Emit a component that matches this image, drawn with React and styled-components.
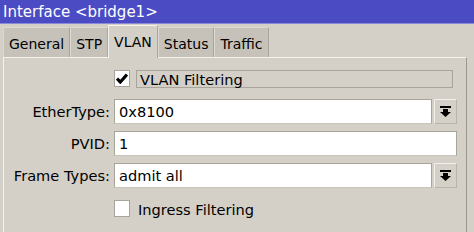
import React from 'react';
import styled, { createGlobalStyle } from 'styled-components';

const GlobalStyle = createGlobalStyle`
  html, body {
    margin: 0;
    padding: 0;
    background: #d4d0c8;
  }
  body {
    font-family: "DejaVu Sans", Verdana, sans-serif;
    font-size: 14.6px;
    color: #000;
  }
`;

const Window = styled.div`
  width: 474px;
  height: 232px;
  overflow: hidden;
  background: #d4d0c8;
  display: flex;
  flex-direction: column;
`;

const TitleBar = styled.div`
  height: 24px;
  background: #4b4cc4;
  color: #fff;
  font-size: 15px;
  display: flex;
  align-items: center;
  padding-left: 3px;
  border-bottom: 1px solid #8a8ad8;
  box-sizing: border-box;
`;

const Tabs = styled.div`
  display: flex;
  align-items: flex-end;
  height: 33px;
  padding-left: 3px;
`;

const Tab = styled.div`
  height: ${p => (p.$active ? '33px' : '30px')};
  box-sizing: border-box;
  padding: 0 5px;
  display: flex;
  align-items: center;
  padding-top: ${p => (p.$active ? '0' : '2px')};
  background: ${p => (p.$active ? '#d4d0c8' : '#c6c2ba')};
  border-top: 1px solid ${p => (p.$active ? '#f4f2ee' : '#dcd9d3')};
  border-left: 1px solid ${p => (p.$active ? '#f4f2ee' : '#dcd9d3')};
  border-right: 1px solid #aaa69e;
  font-size: 14px;
  margin-bottom: ${p => (p.$active ? '-1px' : '0')};
  position: relative;
  z-index: ${p => (p.$active ? 1 : 0)};
`;

const Panel = styled.div`
  flex: 1;
  margin: 0 7px 0 3px;
  border-top: 1px solid #f4f2ee;
  border-left: 1px solid #f4f2ee;
  border-right: 1px solid #9c988f;
  padding: 12px 9px 0 0;
  display: flex;
  flex-direction: column;
`;

const Row = styled.div`
  display: flex;
  align-items: center;
  height: ${p => p.$h || 25}px;
  margin-top: ${p => p.$gap || 0}px;
`;

const Label = styled.div`
  width: 106px;
  text-align: right;
  padding-right: 4px;
  white-space: nowrap;
`;

const Field = styled.div`
  flex: 1;
  display: flex;
  gap: 2px;
  height: 100%;
`;

const Input = styled.div`
  flex: 1;
  background: #fff;
  border: 1px solid #a8a49c;
  border-bottom-color: #c8c4bc;
  box-sizing: border-box;
  display: flex;
  align-items: center;
  padding-left: 4px;
`;

const DropButton = styled.div`
  width: 23px;
  box-sizing: border-box;
  background: #d4d0c8;
  border: 1px solid #b8b4ac;
  border-top-color: #f2f0ec;
  border-left-color: #f2f0ec;
  display: flex;
  align-items: center;
  justify-content: center;
`;

const Check = styled.div`
  width: 16px;
  height: 17px;
  box-sizing: border-box;
  background: #fff;
  border: 1px solid #a8a49c;
  display: flex;
  align-items: center;
  justify-content: center;
  flex-shrink: 0;
`;

const CheckText = styled.div`
  margin-left: ${p => (p.$boxed ? '4px' : '6px')};
  flex: ${p => (p.$boxed ? 1 : 'none')};
  height: 100%;
  box-sizing: border-box;
  display: flex;
  align-items: center;
  padding-left: ${p => (p.$boxed ? '3px' : '0')};
  border: ${p => (p.$boxed ? '1px solid #a8a49c' : 'none')};
  margin-right: ${p => (p.$boxed ? '4px' : '0')};
`;

const DropIcon = () => (
  <svg width="11" height="11" viewBox="0 0 11 11">
    <rect x="0" y="0" width="11" height="2" fill="#000" />
    <rect x="3" y="3" width="5" height="3" fill="#000" />
    <polygon points="0,6 11,6 5.5,11" fill="#000" />
  </svg>
);

const Tick = () => (
  <svg width="12" height="11" viewBox="0 0 12 11">
    <polyline points="1,5.5 4.3,9 11,1.5" fill="none" stroke="#000" strokeWidth="3.2" />
  </svg>
);

const tabs = ['General', 'STP', 'VLAN', 'Status', 'Traffic'];

export default function App() {
  return (
    <Window>
      <GlobalStyle />
      <TitleBar>Interface &lt;bridge1&gt;</TitleBar>
      <Tabs>
        {tabs.map(t => (
          <Tab key={t} $active={t === 'VLAN'}>{t}</Tab>
        ))}
      </Tabs>
      <Panel>
        <Row $h={18}>
          <Label />
          <Field>
            <Check><Tick /></Check>
            <CheckText $boxed>VLAN Filtering</CheckText>
          </Field>
        </Row>
        <Row $gap={11}>
          <Label>EtherType:</Label>
          <Field>
            <Input>0x8100</Input>
            <DropButton><DropIcon /></DropButton>
          </Field>
        </Row>
        <Row $gap={7}>
          <Label>PVID:</Label>
          <Field>
            <Input>1</Input>
          </Field>
        </Row>
        <Row $gap={7}>
          <Label>Frame Types:</Label>
          <Field>
            <Input>admit all</Input>
            <DropButton><DropIcon /></DropButton>
          </Field>
        </Row>
        <Row $h={18} $gap={12}>
          <Label />
          <Field>
            <Check />
            <CheckText>Ingress Filtering</CheckText>
          </Field>
        </Row>
      </Panel>
    </Window>
  );
}
